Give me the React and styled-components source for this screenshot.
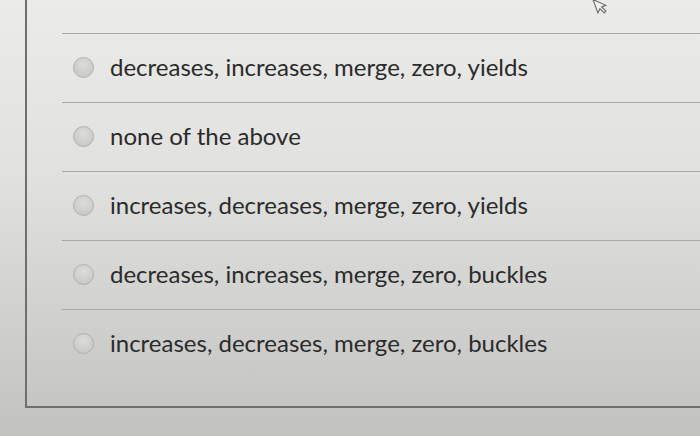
import React from 'react';
import styled, { createGlobalStyle } from 'styled-components';

const Global = createGlobalStyle`
  html, body {
    margin: 0;
    padding: 0;
  }
  body {
    width: 700px;
    height: 436px;
    overflow: hidden;
    font-family: Lato, "Open Sans", sans-serif;
  }
`;

const Screen = styled.div`
  position: relative;
  width: 700px;
  height: 436px;
  background: linear-gradient(180deg, #ebebe9 0%, #e1e1df 40%, #cfcfcd 75%, #c2c2c0 100%);
  overflow: hidden;
`;

const Panel = styled.div`
  margin-left: 25px;
  height: 408px;
  box-sizing: border-box;
  border-left: 2px solid #6f6f6d;
  border-bottom: 2px solid #6f6f6d;
  padding: 33px 0 0 35px;
`;

const Option = styled.label`
  display: flex;
  align-items: center;
  height: 69px;
  box-sizing: border-box;
  border-top: 1.5px solid #a9a9a7;
  padding: 0 0 3px 11px;
  gap: 16px;
  color: #2b2b2b;
  font-size: 24px;
  letter-spacing: 0;
`;

const Radio = styled.span`
  flex: none;
  width: 21px;
  height: 21px;
  margin-top: 1px;
  border-radius: 50%;
  box-sizing: border-box;
  border: 1px solid #b0b0ae;
  background: radial-gradient(circle at 50% 35%, #dcdcda 0%, #cbcbc9 70%, #bfbfbd 100%);
`;

const Cursor = styled.svg`
  position: absolute;
  left: 592px;
  top: -4px;
`;

const options = [
  'decreases, increases, merge, zero, yields',
  'none of the above',
  'increases, decreases, merge, zero, yields',
  'decreases, increases, merge, zero, buckles',
  'increases, decreases, merge, zero, buckles',
];

export default function App() {
  return (
    <Screen>
      <Global />
      <Panel>
        {options.map((text) => (
          <Option key={text}>
            <Radio />
            <span>{text}</span>
          </Option>
        ))}
      </Panel>
      <Cursor width="22" height="22" viewBox="0 0 20 20">
        <path
          d="M3 1 L3 14 L6 11 L8.5 16 L10.5 15 L8 10 L12 10 Z"
          fill="#f2f2f0"
          stroke="#6a6a68"
          strokeWidth="1"
          transform="rotate(-20 8 8)"
        />
      </Cursor>
    </Screen>
  );
}
